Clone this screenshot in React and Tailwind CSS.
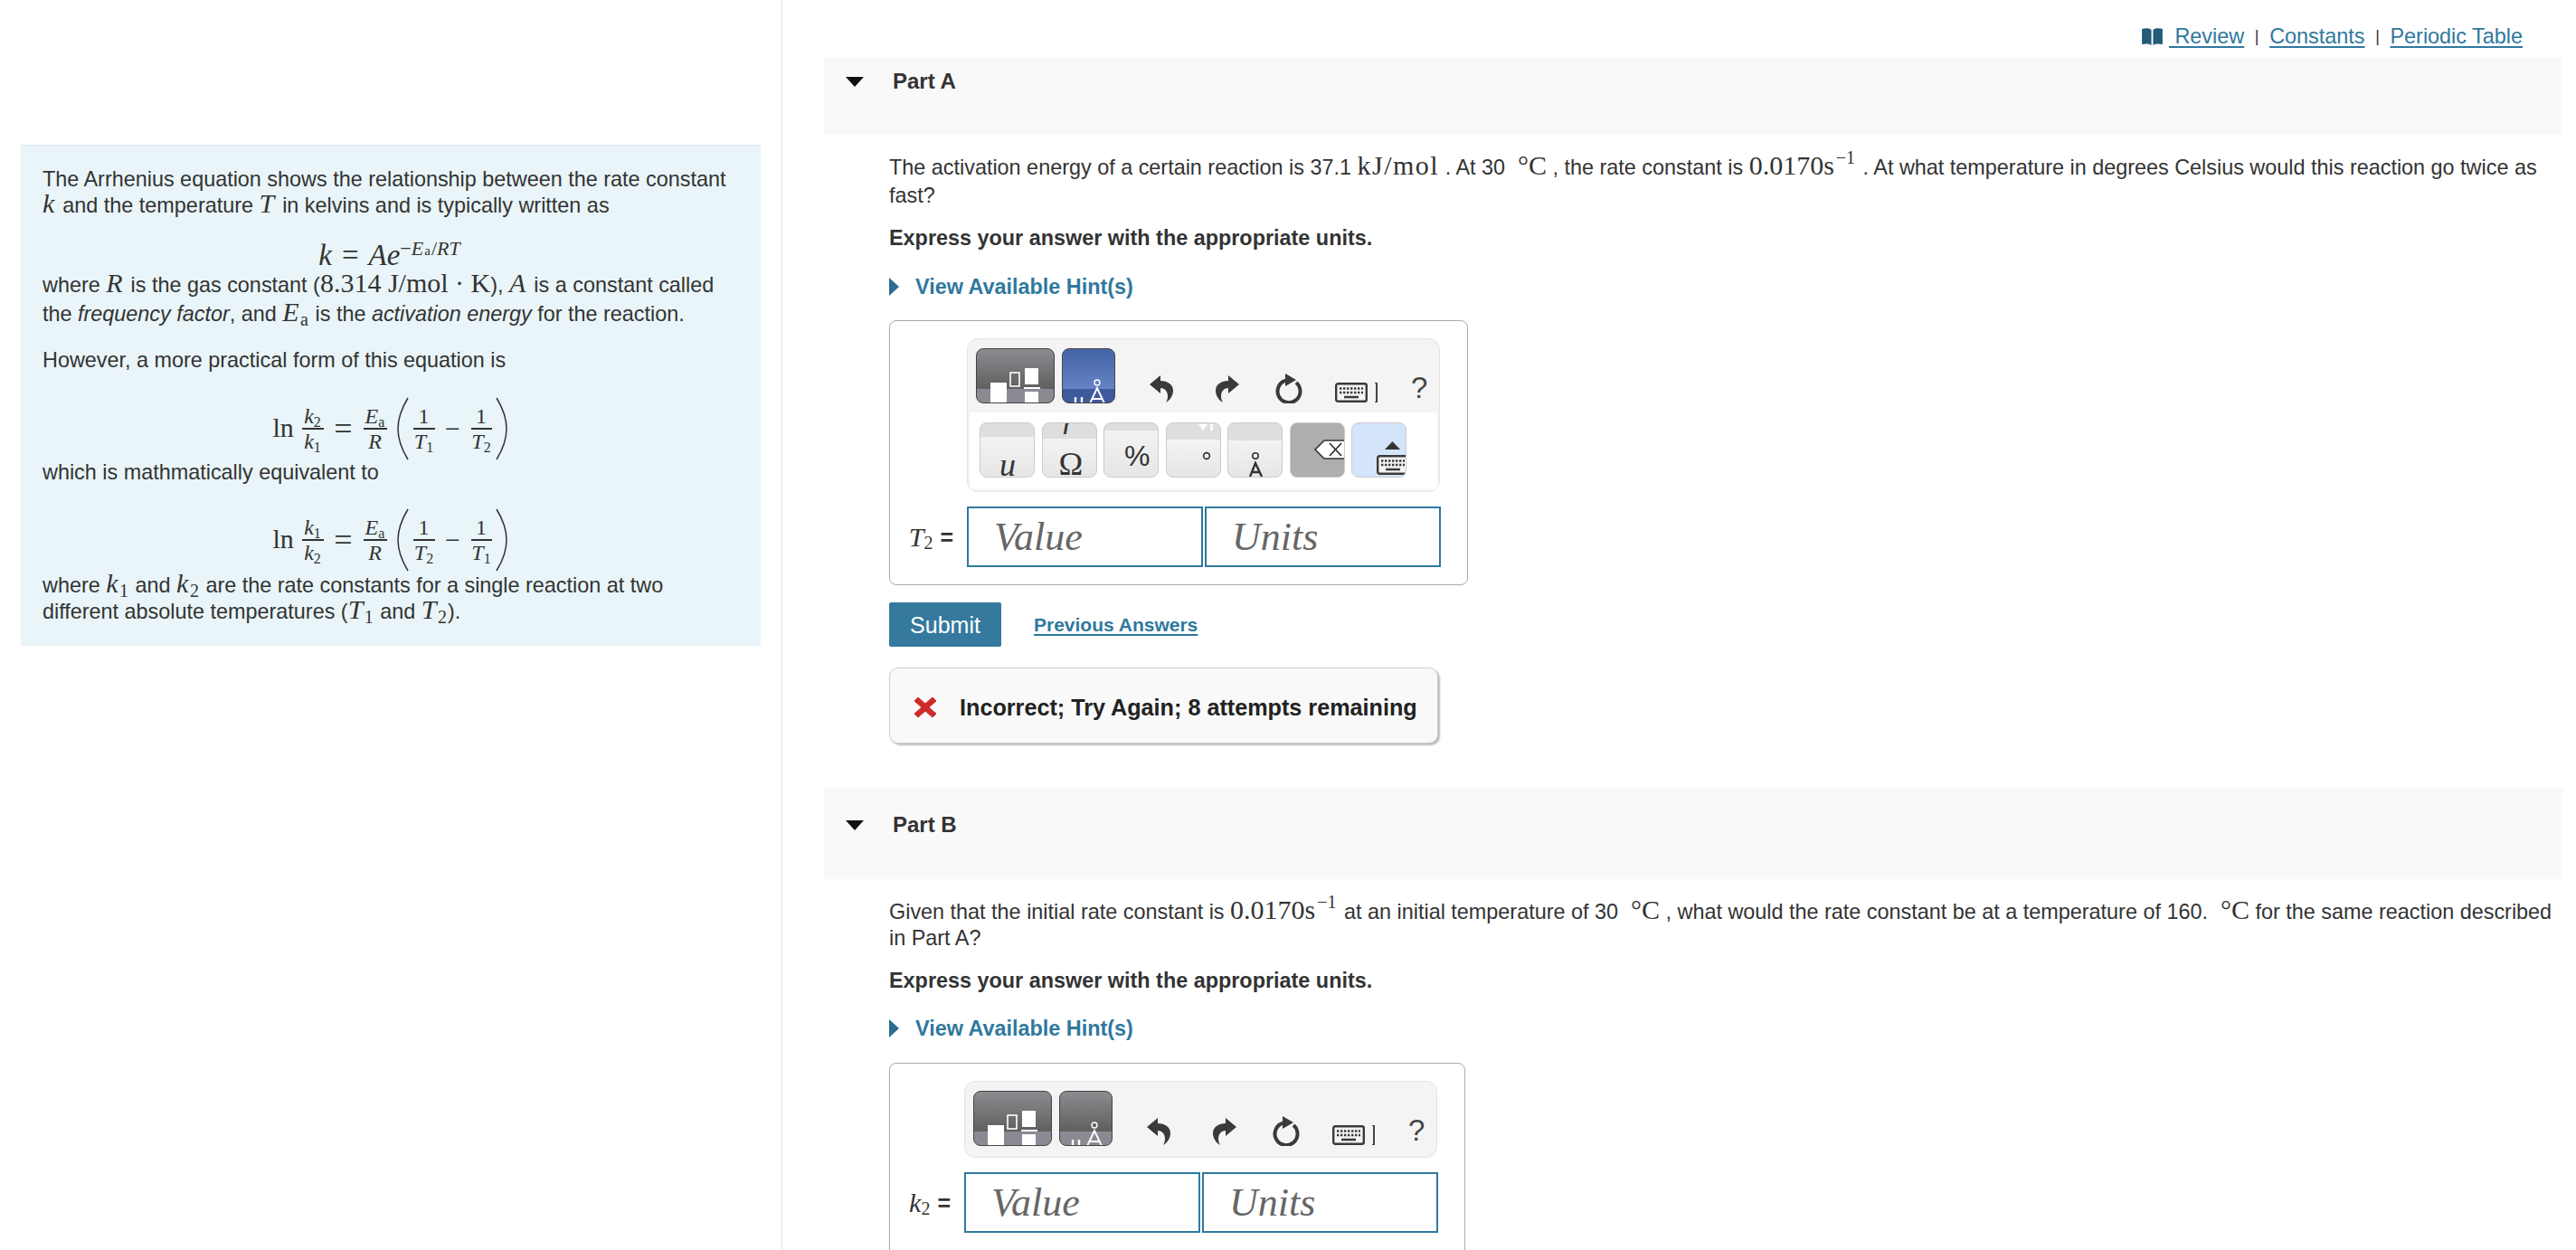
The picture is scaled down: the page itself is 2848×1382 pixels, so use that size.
const serif = "font-['Liberation_Serif',serif]";

const M = ({ children }) => <span className={`${serif} italic text-[30px] leading-[0] tracking-[2.5px]`}>{children}</span>;
const R = ({ children }) => <span className={`${serif} text-[30px] leading-[0]`}>{children}</span>;
const Sub = ({ children }) => <sub className={`${serif} text-[20px] leading-[0] -ml-[1px] mr-[1px]`}>{children}</sub>;
const Neg1 = () => <sup className="text-[20px] leading-[0] -top-[12px] ml-[2px] mr-[2px]">−1</sup>;

// small stacked fraction for the display equations
const Frac = ({ top, bottom, w }) => (
  <span className={`inline-flex flex-col items-center ${serif} text-[24px] leading-[26px] ${w}`}>
    <span className="w-full border-b-2 border-[#333] text-center whitespace-nowrap">{top}</span>
    <span className="w-full text-center whitespace-nowrap">{bottom}</span>
  </span>
);

const V = ({ l, s }) => (
  <i>
    {l}
    <sub className="text-[16px] not-italic leading-none">{s}</sub>
  </i>
);

const Paren = ({ flip }) => (
  <svg width="14" height="70" viewBox="0 0 14 70" className={flip ? "-scale-x-100" : ""}>
    <path d="M13 1 C5 14 2 25 2 35 C2 45 5 56 13 69" fill="none" stroke="#333" strokeWidth="1.5" />
  </svg>
);

const DisplayEq = ({ a, b, c, d }) => (
  <div className={`flex items-center justify-center ${serif} text-[#333]`}>
    <span className="text-[30px] w-[23px] mr-[9px] leading-[30px] -mt-[2px]">ln</span>
    <Frac w="w-[24px]" top={<V l="k" s={a} />} bottom={<V l="k" s={b} />} />
    <span className="text-[36px] w-[22px] mx-[11px] leading-[36px] text-center">=</span>
    <Frac w="w-[26px]" top={<V l="E" s="a" />} bottom={<i>R</i>} />
    <span className="ml-[10px] mr-[5px]"><Paren /></span>
    <Frac w="w-[24px]" top="1" bottom={<V l="T" s={c} />} />
    <span className="text-[30px] w-[18px] mx-[11px] leading-[30px] text-center">−</span>
    <Frac w="w-[23px]" top="1" bottom={<V l="T" s={d} />} />
    <span className="ml-[4px]"><Paren flip /></span>
  </div>
);

const Caret = () => (
  <svg width="20" height="11" viewBox="0 0 20 11" className="shrink-0">
    <path d="M0 0 H20 L10 11 Z" fill="#111" />
  </svg>
);

const UndoIcon = ({ flip }) => (
  <svg width="26" height="30" viewBox="0 0 26 30" className={flip ? "-scale-x-100" : ""}>
    <path
      d="M12 0 L0 10 L12 20 V14 C17 14 20 18 20 23 C20 26 19 28 18 30 C23 27 26 22 26 17 C26 10 20 6 12 6 Z"
      fill="#3a3a3a"
    />
  </svg>
);

const ResetIcon = () => (
  <svg width="30" height="33" viewBox="0 0 30 33">
    <path d="M23 10 A12.5 12.5 0 1 1 12 7.5" fill="none" stroke="#3a3a3a" strokeWidth="4" />
    <path d="M11 0 L23 7 L11 14 Z" fill="#3a3a3a" />
  </svg>
);

const KeyboardIcon = () => (
  <svg width="36" height="22" viewBox="0 0 36 22">
    <rect x="1.2" y="1.2" width="33.6" height="19.6" rx="2" fill="#f4f4f4" stroke="#3a3a3a" strokeWidth="2.4" />
    <path d="M5 6.5 H31" stroke="#3a3a3a" strokeWidth="2.6" strokeDasharray="2.4 1.6" />
    <path d="M5 11 H31" stroke="#3a3a3a" strokeWidth="2.6" strokeDasharray="2.4 1.6" />
    <path d="M10 16 H26" stroke="#3a3a3a" strokeWidth="2.6" />
  </svg>
);

const TemplatesBtn = () => (
  <div className="relative w-[87px] h-[61px] rounded-[8px] border border-[#444] overflow-hidden bg-[linear-gradient(#8c8b90,#5f5f5f_75%,#8a8a92_75%)]">
    <svg width="87" height="61" viewBox="0 0 87 61" className="absolute left-0 top-0">
      <rect x="15" y="37" width="18" height="24" fill="#fff" />
      <rect x="37" y="26" width="10" height="15" fill="none" stroke="#fff" strokeWidth="1.6" />
      <rect x="53" y="21" width="15" height="18" fill="#fff" />
      <rect x="52" y="42" width="18" height="2" fill="#fff" />
      <rect x="53" y="47" width="15" height="14" fill="#fff" />
    </svg>
  </div>
);

const UnitsBtn = ({ active }) => (
  <div
    className={`relative w-[59px] h-[61px] rounded-[8px] border border-[#444] overflow-hidden ${
      active
        ? "bg-[linear-gradient(#4464a8,#6484c4_75%,#3e5a9c_75%)]"
        : "bg-[linear-gradient(#8c8b90,#5f5f5f_75%,#8a8a92_75%)]"
    }`}
  >
    <svg width="59" height="61" viewBox="0 0 59 61" className="absolute left-0 top-0">
      <circle cx="38" cy="37" r="3" fill="none" stroke="#fff" strokeWidth="1.4" />
      <path d="M30 60 L38 43 L46 60 M33 55 H43" fill="none" stroke="#fff" strokeWidth="2" />
      <path d="M14 53 V61 M21 53 V61" stroke="#fff" strokeWidth="2.4" />
    </svg>
  </div>
);

const Tools = ({ active }) => (
  <div className="flex items-start h-[81px] pl-[9px] pt-[10px]">
    <TemplatesBtn />
    <div className="ml-[8px]">
      <UnitsBtn active={active} />
    </div>
    <div className="ml-[38px] mt-[30px] flex items-start">
      <UndoIcon />
      <div className="ml-[47px]"><UndoIcon flip /></div>
      <div className="ml-[40px] -mt-[2px]"><ResetIcon /></div>
      <div className="ml-[36px] mt-[8px] flex items-start">
        <KeyboardIcon />
        <span className="ml-[8px] w-[3px] h-[22px] border-r-2 border-t border-b border-[#444]" />
      </div>
      <span className="ml-[37px] -mt-[4px] text-[33px] leading-[36px] font-['Liberation_Sans',sans-serif] text-[#444]">?</span>
    </div>
  </div>
);

const keyBase = "relative w-[61px] h-[61px] rounded-[8px] border border-[#ccc] overflow-hidden";

const KeyRow = () => (
  <div className="flex gap-[7.5px] h-[85px] mx-[2px] bg-white pl-[11px] pt-[11px]">
    <div className={`${keyBase} bg-[linear-gradient(#dedede,#dedede_26%,#f3f3f3_26%,#e6e6e6)]`}>
      <span className={`absolute left-[21px] -bottom-[7px] ${serif} italic text-[36px] leading-[40px] text-[#333]`}>u</span>
    </div>
    <div className={`${keyBase} bg-[linear-gradient(#dedede,#dedede_28%,#f3f3f3_28%,#e6e6e6)]`}>
      <span className={`absolute left-[22px] -top-[14px] ${serif} italic text-[34px] leading-[30px] text-[#333]`}>r</span>
      <span className={`absolute left-[18px] -bottom-[6px] ${serif} text-[36px] leading-[40px] text-[#333]`}>Ω</span>
    </div>
    <div className={`${keyBase} bg-[linear-gradient(#dedede,#dedede_13%,#f3f3f3_13%,#e6e6e6)]`}>
      <span className="absolute left-[22px] top-[16px] text-[32px] leading-[40px] text-[#333] font-['Liberation_Sans',sans-serif]">%</span>
    </div>
    <div className={`${keyBase} bg-[linear-gradient(#dedede,#dedede_31%,#f3f3f3_31%,#e6e6e6)]`}>
      <svg width="61" height="61" className="absolute left-0 top-0">
        <circle cx="44" cy="36" r="3.4" fill="none" stroke="#333" strokeWidth="1.6" />
        <path d="M35 1 H45 L40 8 Z M48 1 H51 V8 H48 Z" fill="#fff" />
      </svg>
    </div>
    <div className={`${keyBase} bg-[linear-gradient(#dedede,#dedede_33%,#f3f3f3_33%,#e6e6e6)]`}>
      <svg width="61" height="61" className="absolute left-0 top-0">
        <circle cx="30" cy="36" r="3.2" fill="none" stroke="#333" strokeWidth="1.6" />
        <path d="M24 59 L30 44 L37 59 M26 54 H35" fill="none" stroke="#333" strokeWidth="2.4" />
      </svg>
    </div>
    <div className={`${keyBase} bg-[#aeaeae]`}>
      <svg width="61" height="61" className="absolute left-0 top-0">
        <path d="M61 19 H37 L27 29 L37 39 H61 Z" fill="#fff" stroke="#333" strokeWidth="1.6" />
        <path d="M43 22 L56 36 M56 22 L43 36" stroke="#333" strokeWidth="1.8" />
      </svg>
    </div>
    <div className={`${keyBase} bg-[#d3e4fb]`}>
      <svg width="61" height="61" className="absolute left-0 top-0">
        <path d="M36 29 L44.5 20 L53 29 Z" fill="#333" />
        <g transform="translate(27 35)">
          <KeyboardIcon />
        </g>
      </svg>
    </div>
  </div>
);

const Inputs = ({ label, lw }) => (
  <div className="flex items-center">
    <div className={`${lw} flex justify-end items-center pr-[15px] text-[#333] text-[25px] font-['Liberation_Sans',sans-serif]`}>
      <span className={`${serif} italic text-[30px] leading-[30px]`}>{label}</span>
      <span className={`${serif} text-[20px] leading-none self-end -mb-[1px] mr-[8px]`}>2</span>
      <span className="font-bold">=</span>
    </div>
    <div className={`w-[261px] h-[67px] border-2 border-[#2f789e] pl-[28px] flex items-center ${serif} italic text-[44px] text-[#666]`}>Value</div>
    <div className={`ml-[2px] w-[261px] h-[67px] border-2 border-[#2f789e] pl-[28px] flex items-center ${serif} italic text-[44px] text-[#666]`}>Units</div>
  </div>
);

const HintLink = ({ mt }) => (
  <div className={`flex items-center h-[30px] ${mt}`}>
    <svg width="11" height="20" viewBox="0 0 11 20">
      <path d="M0 0 L11 10 L0 20 Z" fill="#2b6e92" />
    </svg>
    <span className="ml-[18px] font-bold text-[#2f789e]">View Available Hint(s)</span>
  </div>
);

export default function App() {
  return (
    <div className="flex h-[1382px] overflow-hidden bg-white font-['Liberation_Sans',sans-serif] text-[23.4px] text-[#333]">
      {/* left info pane */}
      <aside className="w-[865px] shrink-0 border-r border-[#dfe5ea] pt-[160px] pl-[23px] pr-[23px]">
        <div className="bg-[#e9f5f8] border-t border-[#dde3e6] h-[554px] px-[24px] pt-[23px] leading-[29px]">
          <p>The Arrhenius equation shows the relationship between the rate constant</p>
          <p>
            <M>k</M> and the temperature <M>T</M> in kelvins and is typically written as
          </p>
          <div className={`h-[57px] flex items-end justify-center ${serif} italic text-[33px] leading-[30px] pr-[3px]`}>
            <span className="whitespace-nowrap">
              k<span className="not-italic mx-[11px]">=</span>Ae
              <sup className="inline-block text-[22px] leading-[22px] -top-[11px]">
                <span className="not-italic">−</span>E<span className="not-italic text-[15px] ml-[1px]">a</span>
                <span className="not-italic ml-[1px]">/</span>RT
              </sup>
            </span>
          </div>
          <p className="leading-[32px]">
            where <M>R</M> is the gas constant (<R>8.314 J/mol · K</R>), <M>A</M> is a constant called
          </p>
          <p className="leading-[32px]">
            the <i>frequency factor</i>, and <M>E</M>
            <Sub>a</Sub> is the <i>activation energy</i> for the reaction.
          </p>
          <p className="mt-[21px]">However, a more practical form of this equation is</p>
          <div className="h-[95px] pt-[26px] flex items-center justify-center pr-[1px]">
            <DisplayEq a="2" b="1" c="1" d="2" />
          </div>
          <p>which is mathmatically equivalent to</p>
          <div className="h-[96px] pt-[24px] flex items-center justify-center pr-[1px]">
            <DisplayEq a="1" b="2" c="2" d="1" />
          </div>
          <p>
            where <M>k</M>
            <Sub>1</Sub> and <M>k</M>
            <Sub>2</Sub> are the rate constants for a single reaction at two
          </p>
          <p>
            different absolute temperatures (<M>T</M>
            <Sub>1</Sub> and <M>T</M>
            <Sub>2</Sub>).
          </p>
        </div>
      </aside>

      {/* right question pane */}
      <main className="flex-1 min-w-0 pl-[46px] pr-[15px]">
        <div className="h-[63px] flex items-center justify-end pr-[44px] pt-[18px]">
          <svg width="23" height="19" viewBox="0 0 24 20">
            <path d="M0 1 C4 0 8 0 11 2 V20 C8 18 4 18 0 19 Z M13 2 C16 0 20 0 24 1 V19 C20 18 16 18 13 20 Z" fill="#245c78" />
          </svg>
          <a className="ml-[7px] text-[#2f789e] underline underline-offset-[3px] whitespace-pre"> Review</a>
          <span className="w-[28px] text-center text-[18px]">|</span>
          <a className="text-[#2f789e] underline underline-offset-[3px]">Constants</a>
          <span className="w-[28px] text-center text-[18px]">|</span>
          <a className="text-[#2f789e] underline underline-offset-[3px]">Periodic Table</a>
        </div>

        <div className="h-[86px] bg-[#f9f9f9] flex items-start pt-[12px] pl-[24px]">
          <div className="mt-[10px]"><Caret /></div>
          <span className="ml-[32px] font-bold text-[24px] text-[#333] leading-[30px]">Part A</span>
        </div>

        <div className="pl-[72px] leading-[30px]">
          <p className="mt-[21px] h-[30px] whitespace-nowrap">
            The activation energy of a certain reaction is 37.1 <R><span className="tracking-[1.5px]">kJ/mol</span></R> . At 30 <R>&nbsp;°C</R> , the rate constant is{" "}
            <R>0.0170s<Neg1 /></R> . At what temperature in degrees Celsius would this reaction go twice as
          </p>
          <p className="mt-[1px] h-[30px]">fast?</p>
          <p className="mt-[17px] h-[30px] font-bold">Express your answer with the appropriate units.</p>
          <HintLink mt="mt-[24px]" />

          <div className="mt-[22px] w-[640px] h-[293px] border border-[#aaa] rounded-[8px] pt-[19px]">
            <div className="ml-[85px] w-[523px] h-[170px] bg-[#f4f4f4] border border-[#e4e4e4] rounded-[12px] overflow-hidden">
              <Tools active />
              <KeyRow />
            </div>
            <div className="mt-[16px]">
              <Inputs label="T" lw="w-[85px]" />
            </div>
          </div>

          <div className="mt-[19px] flex items-center">
            <button className="w-[124px] h-[49px] bg-[#35799e] rounded-[2px] text-white text-[25px]">Submit</button>
            <a className="ml-[36px] font-bold text-[#2f789e] text-[21px] underline underline-offset-[3px]">Previous Answers</a>
          </div>

          <div className="mt-[23px] w-[607px] h-[84px] pt-[3px] bg-[#f9f9f9] border border-[#ccc] rounded-[10px] shadow-[2px_2px_2px_#bbb] flex items-center pl-[26px]">
            <svg width="26" height="26" viewBox="0 0 26 26">
              <path d="M5 2 L13 9 L21 2 L25 6 L17 13 L25 20 L21 24 L13 17 L5 24 L1 20 L9 13 L1 6 Z" fill="#cf2a2a" stroke="#cf2a2a" strokeWidth="1" strokeLinejoin="round" />
            </svg>
            <span className="ml-[25px] font-bold text-[25.2px] text-[#222]">Incorrect; Try Again; 8 attempts remaining</span>
          </div>
        </div>

        <div className="mt-[49px] h-[101px] bg-[#f9f9f9] flex items-start pt-[26px] pl-[24px]">
          <div className="mt-[10px]"><Caret /></div>
          <span className="ml-[32px] font-bold text-[24px] text-[#333] leading-[30px]">Part B</span>
        </div>

        <div className="pl-[72px] leading-[30px]">
          <p className="mt-[21px] h-[30px] whitespace-nowrap">
            Given that the initial rate constant is <R>0.0170s<Neg1 /></R> at an initial temperature of 30 <R>&nbsp;°C</R> , what would the rate constant be at a temperature of 160. <R>&nbsp;°C</R> for the same reaction described
          </p>
          <p className="-mt-[1px] h-[30px]">in Part A?</p>
          <p className="mt-[17px] h-[30px] font-bold">Express your answer with the appropriate units.</p>
          <HintLink mt="mt-[23px]" />

          <div className="mt-[23px] w-[637px] h-[230px] border border-[#aaa] rounded-[8px] pt-[19px]">
            <div className="ml-[82px] w-[523px] h-[85px] bg-[#f4f4f4] border border-[#e4e4e4] rounded-[12px] overflow-hidden">
              <Tools active={false} />
            </div>
            <div className="mt-[16px]">
              <Inputs label="k" lw="w-[82px]" />
            </div>
          </div>
        </div>
      </main>
    </div>
  );
}
